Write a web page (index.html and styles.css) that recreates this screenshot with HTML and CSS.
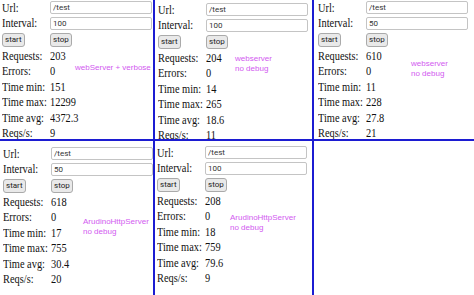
FILE: index.html
```html
<!DOCTYPE html>
<html>
<head>
<meta charset="utf-8">
<link rel="stylesheet" href="styles.css">
</head>
<body>
<div class="frames">
  <section class="frame f1">
    <div class="form">
      <span class="lbl">Url:</span><input class="txt" value="/test">
      <span class="lbl">Interval:</span><input class="txt" value="100">
      <button class="btn">start</button><button class="btn">stop</button>
      <span class="lbl">Requests:</span><span class="lbl">203</span>
      <span class="lbl">Errors:</span><span class="lbl">0</span>
      <span class="lbl">Time min:</span><span class="lbl">151</span>
      <span class="lbl">Time max:</span><span class="lbl">12299</span>
      <span class="lbl">Time avg:</span><span class="lbl">4372.3</span>
      <span class="lbl">Reqs/s:</span><span class="lbl">9</span>
    </div>
    <p class="note">webServer + verbose</p>
  </section>
  <section class="frame f2">
    <div class="form">
      <span class="lbl">Url:</span><input class="txt" value="/test">
      <span class="lbl">Interval:</span><input class="txt" value="100">
      <button class="btn">start</button><button class="btn">stop</button>
      <span class="lbl">Requests:</span><span class="lbl">204</span>
      <span class="lbl">Errors:</span><span class="lbl">0</span>
      <span class="lbl">Time min:</span><span class="lbl">14</span>
      <span class="lbl">Time max:</span><span class="lbl">265</span>
      <span class="lbl">Time avg:</span><span class="lbl">18.6</span>
      <span class="lbl">Reqs/s:</span><span class="lbl">11</span>
    </div>
    <p class="note">webserver<br>no debug</p>
  </section>
  <section class="frame f3">
    <div class="form">
      <span class="lbl">Url:</span><input class="txt" value="/test">
      <span class="lbl">Interval:</span><input class="txt" value="50">
      <button class="btn">start</button><button class="btn">stop</button>
      <span class="lbl">Requests:</span><span class="lbl">610</span>
      <span class="lbl">Errors:</span><span class="lbl">0</span>
      <span class="lbl">Time min:</span><span class="lbl">11</span>
      <span class="lbl">Time max:</span><span class="lbl">228</span>
      <span class="lbl">Time avg:</span><span class="lbl">27.8</span>
      <span class="lbl">Reqs/s:</span><span class="lbl">21</span>
    </div>
    <p class="note">webserver<br>no debug</p>
  </section>
  <section class="frame f4">
    <div class="form">
      <span class="lbl">Url:</span><input class="txt" value="/test">
      <span class="lbl">Interval:</span><input class="txt" value="50">
      <button class="btn">start</button><button class="btn">stop</button>
      <span class="lbl">Requests:</span><span class="lbl">618</span>
      <span class="lbl">Errors:</span><span class="lbl">0</span>
      <span class="lbl">Time min:</span><span class="lbl">17</span>
      <span class="lbl">Time max:</span><span class="lbl">755</span>
      <span class="lbl">Time avg:</span><span class="lbl">30.4</span>
      <span class="lbl">Reqs/s:</span><span class="lbl">20</span>
    </div>
    <p class="note">ArudinoHttpServer<br>no debug</p>
  </section>
  <section class="frame f5">
    <div class="form">
      <span class="lbl">Url:</span><input class="txt" value="/test">
      <span class="lbl">Interval:</span><input class="txt" value="100">
      <button class="btn">start</button><button class="btn">stop</button>
      <span class="lbl">Requests:</span><span class="lbl">208</span>
      <span class="lbl">Errors:</span><span class="lbl">0</span>
      <span class="lbl">Time min:</span><span class="lbl">18</span>
      <span class="lbl">Time max:</span><span class="lbl">759</span>
      <span class="lbl">Time avg:</span><span class="lbl">79.6</span>
      <span class="lbl">Reqs/s:</span><span class="lbl">9</span>
    </div>
    <p class="note">ArudinoHttpServer<br>no debug</p>
  </section>
  <section class="frame f6"></section>
</div>
</body>
</html>
```
FILE: styles.css
```css
html, body {
  margin: 0;
  padding: 0;
  background: #fff;
  overflow: hidden;
}

.frames {
  width: 474px;
  height: 295px;
  display: grid;
  grid-template-columns: 153px 157px 160px;
  grid-template-rows: 139px 154px;
  gap: 2px;
  background: #1c1cd2;
}

.frame {
  background: #fff;
  overflow: hidden;
  position: relative;
  box-sizing: border-box;
}

.f1 { padding: 0 0 0 2px; }
.f2 { padding: 2px 0 0 3px; }
.f3 { padding: 0 0 0 4px; }
.f4 { padding: 5px 0 0 3px; }
.f5 { padding: 4px 0 0 2px; }

.form {
  display: grid;
  grid-template-columns: 48px auto;
  grid-template-rows: 15.5px 15.5px 17px repeat(6, 15.5px);
  align-items: center;
  justify-items: start;
}

.lbl {
  display: inline-block;
  font-family: "Liberation Serif", serif;
  font-size: 12.5px;
  line-height: 12px;
  color: #111;
  white-space: nowrap;
  transform: scaleX(0.83);
  transform-origin: 0 50%;
}

.txt {
  box-sizing: border-box;
  width: 102px;
  height: 13px;
  margin: 0;
  padding: 0 2px;
  border: 1px solid #c4c4c4;
  border-radius: 2px;
  background: #fff;
  font-family: Roboto, sans-serif;
  font-size: 8px;
  color: #333;
  outline: none;
}

.btn {
  box-sizing: border-box;
  height: 14px;
  margin: 0;
  padding: 0 2px;
  border: 1px solid #aaa;
  border-radius: 3px;
  background: #e9e9e9;
  font-family: Roboto, sans-serif;
  font-size: 8px;
  line-height: 12px;
  color: #222;
}

.note {
  position: absolute;
  margin: 0;
  font-family: "Liberation Sans", sans-serif;
  font-size: 8px;
  line-height: 9.5px;
  color: #d25af0;
  white-space: nowrap;
}

.f1 .note { left: 75px; top: 63px; }
.f2 .note { left: 80px; top: 54px; }
.f3 .note { left: 97px; top: 59px; }
.f4 .note { left: 83px; top: 76px; }
.f5 .note { left: 75px; top: 72px; }
```
